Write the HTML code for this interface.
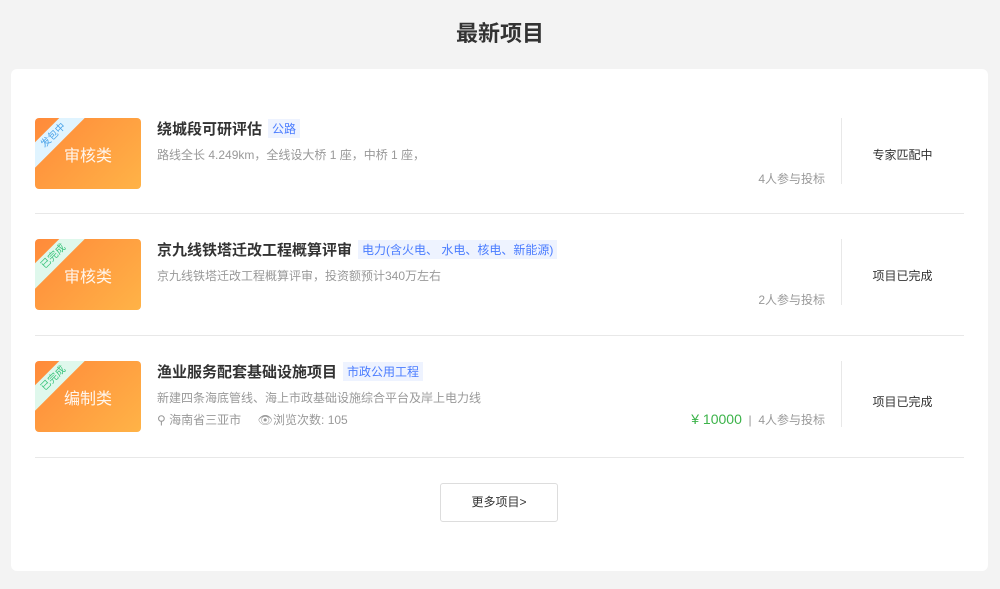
<!DOCTYPE html>
<html><head><meta charset="utf-8"><style>
*{margin:0;padding:0;box-sizing:border-box}
body{width:1000px;height:589px;background:#f3f3f3;font-family:"Liberation Sans","Noto Sans CJK SC",sans-serif;position:relative;overflow:hidden}
h1{position:absolute;top:16px;left:0;width:1000px;text-align:center;font-size:22px;font-weight:bold;color:#333}
.card{position:absolute;left:11px;top:69px;width:977px;height:502px;background:#fff;border-radius:6px}
.row{position:absolute;left:24px;width:929px;height:122px;border-bottom:1px solid #e8e8e8}
.img{position:absolute;left:0;top:0;width:106px;height:71px;border-radius:4px;background:linear-gradient(135deg,#ff8a3a,#ffb347);overflow:hidden}
.img .t{position:absolute;left:0;top:24px;width:106px;text-align:center;color:#fff;font-size:16px;opacity:.9}
.img .rib{position:absolute;left:-26px;top:9px;width:90px;height:18px;transform:rotate(-45deg);font-size:10px;text-align:center;line-height:18px}
.nm{position:absolute;left:122px;top:0;font-size:15px;font-weight:bold;color:#333}
.tag{display:inline-block;font-weight:normal;font-size:12px;color:#4a7cff;background:#eef3ff;padding:1px 4px;margin-left:6px;vertical-align:1px}
.ds{position:absolute;left:122px;top:28px;font-size:12px;color:#999}
.bid{position:absolute;right:139px;top:52px;font-size:12px;color:#999}
.vl{position:absolute;left:806px;top:0;width:1px;height:66px;background:#e8e8e8}
.st{position:absolute;left:806px;width:123px;top:28px;text-align:center;font-size:12px;color:#333}
.btn{position:absolute;left:429px;top:414px;width:118px;height:39px;border:1px solid #ddd;border-radius:3px;text-align:center;line-height:37px;font-size:12px;color:#333}
</style></head><body>
<h1>最新项目</h1>
<div class="card">
<div class="row" style="top:49px;height:96px">
<div class="img"><div class="rib" style="background:#e0f4ff;color:#4aa3e8">发包中</div><div class="t">审核类</div></div>
<div class="nm">绕城段可研评估<span class="tag">公路</span></div>
<div class="ds">路线全长 4.249km，全线设大桥 1 座，中桥 1 座，</div>
<div class="bid">4人参与投标</div>
<div class="vl"></div><div class="st">专家匹配中</div>
</div>
<div class="row" style="top:170px;height:97px">
<div class="img"><div class="rib" style="background:#dff8ec;color:#3cc47e">已完成</div><div class="t">审核类</div></div>
<div class="nm">京九线铁塔迁改工程概算评审<span class="tag">电力(含火电、 水电、核电、新能源)</span></div>
<div class="ds">京九线铁塔迁改工程概算评审，投资额预计340万左右</div>
<div class="bid">2人参与投标</div>
<div class="vl"></div><div class="st">项目已完成</div>
</div>
<div class="row" style="top:292px;height:97px">
<div class="img"><div class="rib" style="background:#dff8ec;color:#3cc47e">已完成</div><div class="t">编制类</div></div>
<div class="nm">渔业服务配套基础设施项目<span class="tag">市政公用工程</span></div>
<div class="ds">新建四条海底管线、海上市政基础设施综合平台及岸上电力线</div>
<div class="ds" style="top:50px">⚲ 海南省三亚市 &nbsp;&nbsp;&nbsp;&nbsp;👁浏览次数: 105</div>
<div class="bid" style="top:50px"><span style="color:#3cb34a;font-size:14px">¥ 10000</span> &nbsp;|&nbsp; 4人参与投标</div>
<div class="vl"></div><div class="st" style="top:32px">项目已完成</div>
</div>
<div class="btn">更多项目&gt;</div>
</div>
</body></html>
